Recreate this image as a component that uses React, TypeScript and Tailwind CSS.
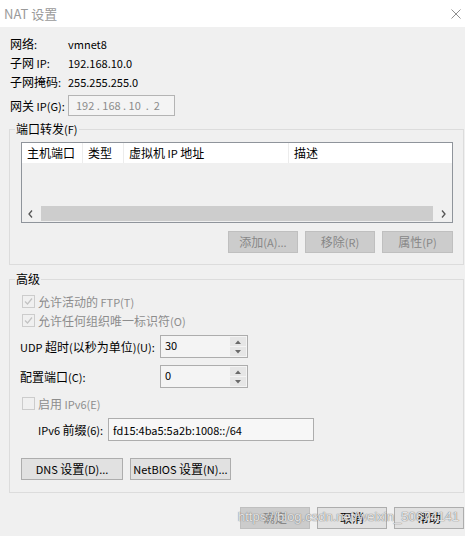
import React from "react";

function T({ s }: { s: string }) {
  const parts = s.split(/([\x20-\x7e]+)/).filter((p) => p.length > 0);
  return (
    <span className="whitespace-pre">
      {parts.map((p, i) =>
        /^[\x20-\x7e]+$/.test(p) ? (
          <span key={i} className="text-[11px]">
            {p}
          </span>
        ) : (
          <React.Fragment key={i}>{p}</React.Fragment>
        )
      )}
    </span>
  );
}

function Check({ checked }: { checked: boolean }) {
  return (
    <span className="w-[13px] h-[13px] border border-[#cccccc] bg-[#f0f0f0] flex items-center justify-center shrink-0">
      {checked && (
        <svg width="9" height="9" viewBox="0 0 9 9">
          <path d="M1 4.5 L3.5 7 L8 1.5" stroke="#c2c2c2" fill="none" strokeWidth="1.2" />
        </svg>
      )}
    </span>
  );
}

function Spinner({ value }: { value: string }) {
  return (
    <div className="w-[88px] h-[23px] shrink-0 border border-[#adadad] bg-[#f4f4f4] flex items-stretch">
      <div className="flex-1 pl-[4px] leading-[18px] text-black">
        <T s={value} />
      </div>
      <div className="w-[16px] mr-[1px] my-[1px] flex flex-col gap-[1px]">
        <div className="flex-1 bg-[#e6e6e6] flex items-center justify-center">
          <svg width="6" height="4" viewBox="0 0 6 4">
            <path d="M0 4 L3 0.5 L6 4 Z" fill="#6a6a6a" />
          </svg>
        </div>
        <div className="flex-1 bg-[#e6e6e6] flex items-center justify-center">
          <svg width="6" height="4" viewBox="0 0 6 4">
            <path d="M0 0 L3 3.5 L6 0 Z" fill="#6a6a6a" />
          </svg>
        </div>
      </div>
    </div>
  );
}

function Btn({ label, disabled, w }: { label: string; disabled?: boolean; w: string }) {
  return (
    <div
      className={
        (disabled
          ? "bg-[#cccccc] border-[#bfbfbf] text-[#878787] "
          : "bg-[#e1e1e1] border-[#adadad] text-black ") +
        w +
        " h-[22px] border flex items-center justify-center leading-[20px] whitespace-nowrap"
      }
    >
      <T s={label} />
    </div>
  );
}

export default function App() {
  return (
    <div className="relative w-[474px] h-[539px] bg-white font-['Noto_Sans_CJK_SC',sans-serif] text-[12px] text-black overflow-hidden">
      {/* Title bar */}
      <div className="h-[27px] flex items-center justify-between pl-[4px] pr-[13px]">
        <span className="text-[13px] text-[#9a9a9a] leading-[16px] whitespace-pre">NAT 设置</span>
        <svg width="10" height="10" viewBox="0 0 10 10">
          <path d="M0.5 0.5 L9.5 9.5 M9.5 0.5 L0.5 9.5" stroke="#8f8f8f" strokeWidth="1" />
        </svg>
      </div>

      {/* Body */}
      <div className="w-[465px] h-[509px] bg-[#f0f0f0] pl-[9px] pt-[7px] flex flex-col">
        {/* info rows */}
        <div className="pl-[1px] flex flex-col">
          <div className="h-[19px] flex items-center whitespace-nowrap">
            <span className="w-[58px]"><T s="网络:" /></span>
            <span><T s="vmnet8" /></span>
          </div>
          <div className="h-[19px] flex items-center whitespace-nowrap">
            <span className="w-[58px]"><T s="子网 IP:" /></span>
            <span><T s="192.168.10.0" /></span>
          </div>
          <div className="h-[19px] flex items-center whitespace-nowrap">
            <span className="w-[58px]"><T s="子网掩码:" /></span>
            <span><T s="255.255.255.0" /></span>
          </div>
          <div className="h-[21px] mt-[4px] flex items-center whitespace-nowrap">
            <span className="w-[58px] shrink-0"><T s="网关 IP(G):" /></span>
            <div className="w-[107px] h-[21px] shrink-0 border border-[#b4b4b4] bg-[#f4f4f4] pl-[7px] flex items-center text-[#8c8c8c] text-[11px] whitespace-pre">
              192 . 168 . 10  .  2
            </div>
          </div>
        </div>

        {/* 端口转发 */}
        <fieldset className="mt-[5px] w-[455px] border border-[#dcdcdc] pl-[11px] pr-[10px] pb-[11px]">
          <legend className="ml-[-6px] px-[1px] leading-[16px]"><T s="端口转发(F)" /></legend>
          <div className="mt-[5px] w-[432px] h-[81px] border border-[#8f949b] flex flex-col">
            <div className="h-[20px] bg-white flex items-center whitespace-nowrap">
              <div className="w-[61px] h-full pl-[5px] border-r border-[#ececec] flex items-center">主机端口</div>
              <div className="w-[41px] h-full pl-[5px] border-r border-[#ececec] flex items-center">类型</div>
              <div className="w-[165px] h-full pl-[5px] border-r border-[#ececec] flex items-center"><T s="虚拟机 IP 地址" /></div>
              <div className="flex-1 h-full pl-[5px] flex items-center">描述</div>
            </div>
            <div className="flex-1" />
            <div className="h-[17px] flex items-stretch">
              <div className="w-[17px] flex items-center justify-center">
                <svg width="5" height="8" viewBox="0 0 5 8">
                  <path d="M4 0.5 L1 4 L4 7.5" stroke="#555" strokeWidth="1.3" fill="none" />
                </svg>
              </div>
              <div className="flex-1 py-[1px] px-[2px]">
                <div className="h-full bg-[#cdcdcd]" />
              </div>
              <div className="w-[17px] flex items-center justify-center">
                <svg width="5" height="8" viewBox="0 0 5 8">
                  <path d="M1 0.5 L4 4 L1 7.5" stroke="#555" strokeWidth="1.3" fill="none" />
                </svg>
              </div>
            </div>
          </div>
          <div className="mt-[8px] w-[432px] flex justify-end gap-[7px]">
            <Btn disabled w="w-[70px]" label="添加(A)..." />
            <Btn disabled w="w-[70px]" label="移除(R)" />
            <Btn disabled w="w-[71px]" label="属性(P)" />
          </div>
        </fieldset>

        {/* 高级 */}
        <fieldset className="mt-[6px] w-[455px] border border-[#dcdcdc] pl-[10px] pb-[12px]">
          <legend className="ml-[-5px] px-[1px] leading-[16px]">高级</legend>
          <div className="mt-[5px] ml-[2px] h-[19px] flex items-center gap-[3px] text-[#8d8d8d] whitespace-nowrap">
            <Check checked />
            <T s="允许活动的 FTP(T)" />
          </div>
          <div className="ml-[2px] h-[19px] flex items-center gap-[3px] text-[#8d8d8d] whitespace-nowrap">
            <Check checked />
            <T s="允许任何组织唯一标识符(O)" />
          </div>
          <div className="mt-[5px] flex items-center whitespace-nowrap">
            <span className="w-[140px] shrink-0"><T s="UDP 超时(以秒为单位)(U):" /></span>
            <Spinner value="30" />
          </div>
          <div className="mt-[7px] flex items-center whitespace-nowrap">
            <span className="w-[140px] shrink-0"><T s="配置端口(C):" /></span>
            <Spinner value="0" />
          </div>
          <div className="mt-[6px] ml-[2px] h-[19px] flex items-center gap-[3px] text-[#8d8d8d] whitespace-nowrap">
            <Check checked={false} />
            <T s="启用 IPv6(E)" />
          </div>
          <div className="mt-[5px] ml-[18px] flex items-center whitespace-nowrap">
            <span className="w-[70px] shrink-0"><T s="IPv6 前缀(6):" /></span>
            <div className="w-[206px] h-[23px] shrink-0 border border-[#adadad] bg-[#f7f7f7] pl-[4px] flex items-center">
              <T s="fd15:4ba5:5a2b:1008::/64" />
            </div>
          </div>
          <div className="mt-[17px] ml-[1px] flex gap-[7px]">
            <Btn w="w-[102px]" label="DNS 设置(D)..." />
            <Btn w="w-[101px]" label="NetBIOS 设置(N)..." />
          </div>
        </fieldset>

        {/* bottom buttons */}
        <div className="mt-[14px] w-[455px] flex justify-end gap-[7px]">
          <Btn disabled w="w-[70px]" label="确定" />
          <Btn w="w-[70px]" label="取消" />
          <Btn w="w-[70px]" label="帮助" />
        </div>
      </div>

      {/* watermark */}
      <div className="absolute left-[238px] top-[509px] text-[13px] leading-[16px] text-white/80 font-['Liberation_Sans',sans-serif] [text-shadow:0_0_1px_#777,0_0_1px_#777]">
        https://blog.csdn.net/weixin_50674141
      </div>
    </div>
  );
}
